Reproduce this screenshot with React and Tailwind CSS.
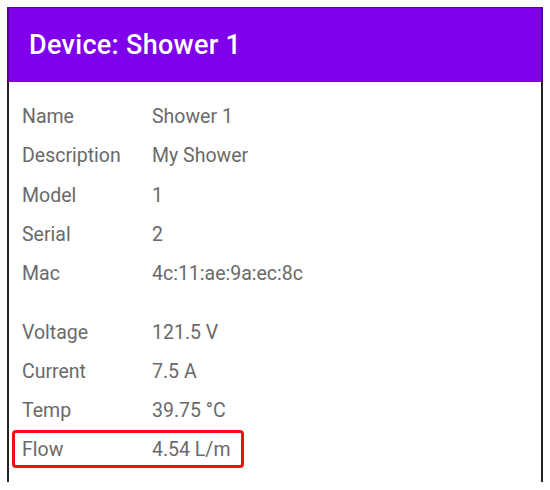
import React from "react";

const info = [
  ["Name", "Shower 1"],
  ["Description", "My Shower"],
  ["Model", "1"],
  ["Serial", "2"],
  ["Mac", "4c:11:ae:9a:ec:8c"],
];

const readings = [
  ["Voltage", "121.5 V"],
  ["Current", "7.5 A"],
  ["Temp", "39.75 °C"],
];

function Row({ label, value }) {
  return (
    <div className="flex items-center h-[39.3px]">
      <div className="w-[130px]">{label}</div>
      <div>{value}</div>
    </div>
  );
}

export default function App() {
  return (
    <div className="w-[550px] h-[490px] bg-white pt-[7px] px-[7px] font-['Roboto',sans-serif]">
      <div className="h-[475px] border-x-2 border-[#222] flex flex-col">
        <div className="h-[75px] bg-[#7f00ea] border-t border-[#5a00a8] flex items-center pl-5 -mx-[2px] border-x-2 border-x-[#5200a0]">
          <h1 className="text-white text-[27px] font-medium tracking-[0.3px]">Device: Shower 1</h1>
        </div>
        <div className="pl-[13px] pt-[15px] text-[19.5px] text-[#6a6a6a]">
          {info.map(([l, v]) => (
            <Row key={l} label={l} value={v} />
          ))}
          <div className="h-[19px]" />
          {readings.map(([l, v]) => (
            <Row key={l} label={l} value={v} />
          ))}
          <div className="-ml-[10px] w-[232px] h-[38px] border-[3px] border-[#ee1111] rounded-[4px] flex items-center pl-[7px]">
            <div className="w-[130px]">Flow</div>
            <div>4.54 L/m</div>
          </div>
        </div>
      </div>
    </div>
  );
}
